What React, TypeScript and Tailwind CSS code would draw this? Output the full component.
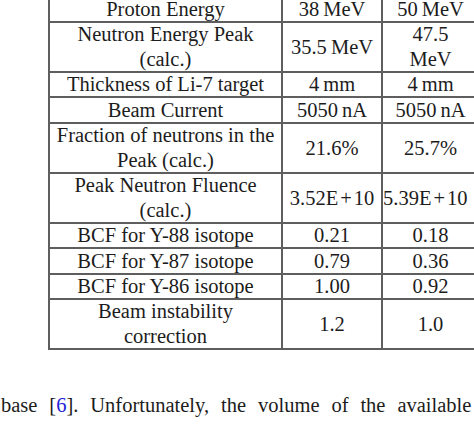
import * as React from 'react';

type Row = {
	label: React.ReactNode;
	a: React.ReactNode;
	b: React.ReactNode;
	h: string;
};

const rows: Row[] = [
	{ label: 'Proton Energy', a: '38\u2009MeV', b: '50\u2009MeV', h: 'h-[23px]' },
	{
		label: (
			<>
				Neutron Energy Peak
				<br />
				(calc.)
			</>
		),
		a: '35.5\u2009MeV',
		b: (
			<>
				47.5
				<br />
				MeV
			</>
		),
		h: 'h-[48px]',
	},
	{ label: 'Thickness of Li-7 target', a: '4\u2009mm', b: '4\u2009mm', h: 'h-[23px]' },
	{ label: 'Beam Current', a: '5050\u2009nA', b: '5050\u2009nA', h: 'h-[24px]' },
	{
		label: (
			<>
				Fraction of neutrons in the
				<br />
				Peak (calc.)
			</>
		),
		a: '21.6%',
		b: '25.7%',
		h: 'h-[48px]',
	},
	{
		label: (
			<>
				Peak Neutron Fluence
				<br />
				(calc.)
			</>
		),
		a: (
			<>
				3.52E<span className="px-[2px]">+</span>10
			</>
		),
		b: (
			<span className="self-start whitespace-nowrap">
				5.39E<span className="px-[2px]">+</span>10
			</span>
		),
		h: 'h-[48px]',
	},
	{ label: 'BCF for Y-88 isotope', a: '0.21', b: '0.18', h: 'h-[23px]' },
	{ label: 'BCF for Y-87 isotope', a: '0.79', b: '0.36', h: 'h-[24px]' },
	{ label: 'BCF for Y-86 isotope', a: '1.00', b: '0.92', h: 'h-[23px]' },
	{
		label: (
			<>
				Beam instability
				<br />
				correction
			</>
		),
		a: '1.2',
		b: '1.0',
		h: 'h-[48px]',
	},
];

function Cell({ children, h }: { children: React.ReactNode; h: string }) {
	return (
		<div
			className={`${h} bg-white flex items-center justify-center text-center overflow-hidden`}
		>
			<div className="flex flex-col items-center w-full">{children}</div>
		</div>
	);
}

export default function App() {
	return (
		<div className="w-[474px] h-[428px] overflow-hidden bg-white font-[family-name:'Liberation_Serif',serif] text-[20.5px] leading-[25px] text-[#1c1c1c]">
			{/* table */}
			<div className="ml-[48px] -mt-[4px] w-[432px] grid grid-cols-[231px_98px_95px] gap-[2px] p-[2px] bg-[#5e5e5e]">
				{rows.map((r, i) => (
					<React.Fragment key={i}>
						<Cell h={r.h}>
							<div>{r.label}</div>
						</Cell>
						<Cell h={r.h}>
							<div className="whitespace-nowrap">{r.a}</div>
						</Cell>
						<Cell h={r.h}>{r.b}</Cell>
					</React.Fragment>
				))}
			</div>

			{/* body text */}
			<p className="mt-[43px] pl-[1px] whitespace-nowrap [word-spacing:6.8px]">
				base [<span className="text-[#2323d8]">6</span>]. Unfortunately, the
				volume of the available
			</p>
		</div>
	);
}
